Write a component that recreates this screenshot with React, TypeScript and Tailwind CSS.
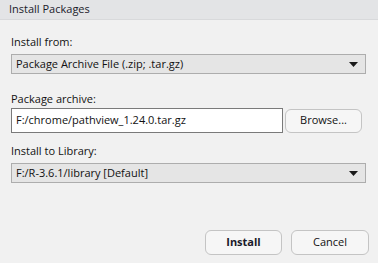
import React from 'react';

function Caret() {
  return (
    <svg width="9" height="5" viewBox="0 0 9 5" className="shrink-0">
      <path d="M0 0 H9 L4.5 5 Z" fill="#1a1a1a" />
    </svg>
  );
}

function SelectBox({ value }: { value: string }) {
  return (
    <div className="h-[20px] w-[355px] flex items-center justify-between border border-[#adadad] bg-[#e5e5e5] pl-[4px] pr-[7px] text-[11px] text-[#111]">
      <span>{value}</span>
      <Caret />
    </div>
  );
}

export default function App() {
  return (
    <div className="w-[378px] h-[263px] bg-[#f1f1f1] flex flex-col text-[#111]" style={{ fontFamily: '"Open Sans", "Noto Sans", sans-serif' }}>
      <div className="h-[20px] bg-[#e3e4e6] border-b border-[#d8d9db] flex items-center pl-[9px] text-[11px] text-[#1b1b2b]">
        Install Packages
      </div>

      <div className="flex flex-col pl-[11px] pt-[14px]">
        <div className="text-[11px] leading-[16px] h-[16px]">Install from:</div>
        <div className="mt-[4px]">
          <SelectBox value="Package Archive File (.zip; .tar.gz)" />
        </div>

        <div className="text-[11px] leading-[16px] h-[16px] mt-[17px]">Package archive:</div>
        <div className="flex items-center gap-[2px] mt-[1px]">
          <div className="h-[25px] w-[272px] border border-[#7a7a7a] bg-white flex items-center pl-[4px] text-[11px]">
            F:/chrome/pathview_1.24.0.tar.gz
          </div>
          <button className="h-[24px] w-[77px] rounded-[6px] border border-[#c4c4c4] bg-[#f6f6f6] text-[11px] text-[#111]">
            Browse...
          </button>
        </div>

        <div className="text-[11px] leading-[16px] h-[16px] mt-[10px]">Install to Library:</div>
        <div className="mt-[4px]">
          <SelectBox value="F:/R-3.6.1/library [Default]" />
        </div>
      </div>

      <div className="flex justify-end gap-[9px] pr-[9px] mt-auto mb-[8px]">
        <button className="h-[25px] w-[77px] rounded-[6px] border border-[#c4c4c4] bg-[#f6f6f6] text-[11px] font-bold text-[#1a1a2a]">
          Install
        </button>
        <button className="h-[25px] w-[78px] rounded-[6px] border border-[#c4c4c4] bg-[#f6f6f6] text-[11px] text-[#111]">
          Cancel
        </button>
      </div>
    </div>
  );
}
